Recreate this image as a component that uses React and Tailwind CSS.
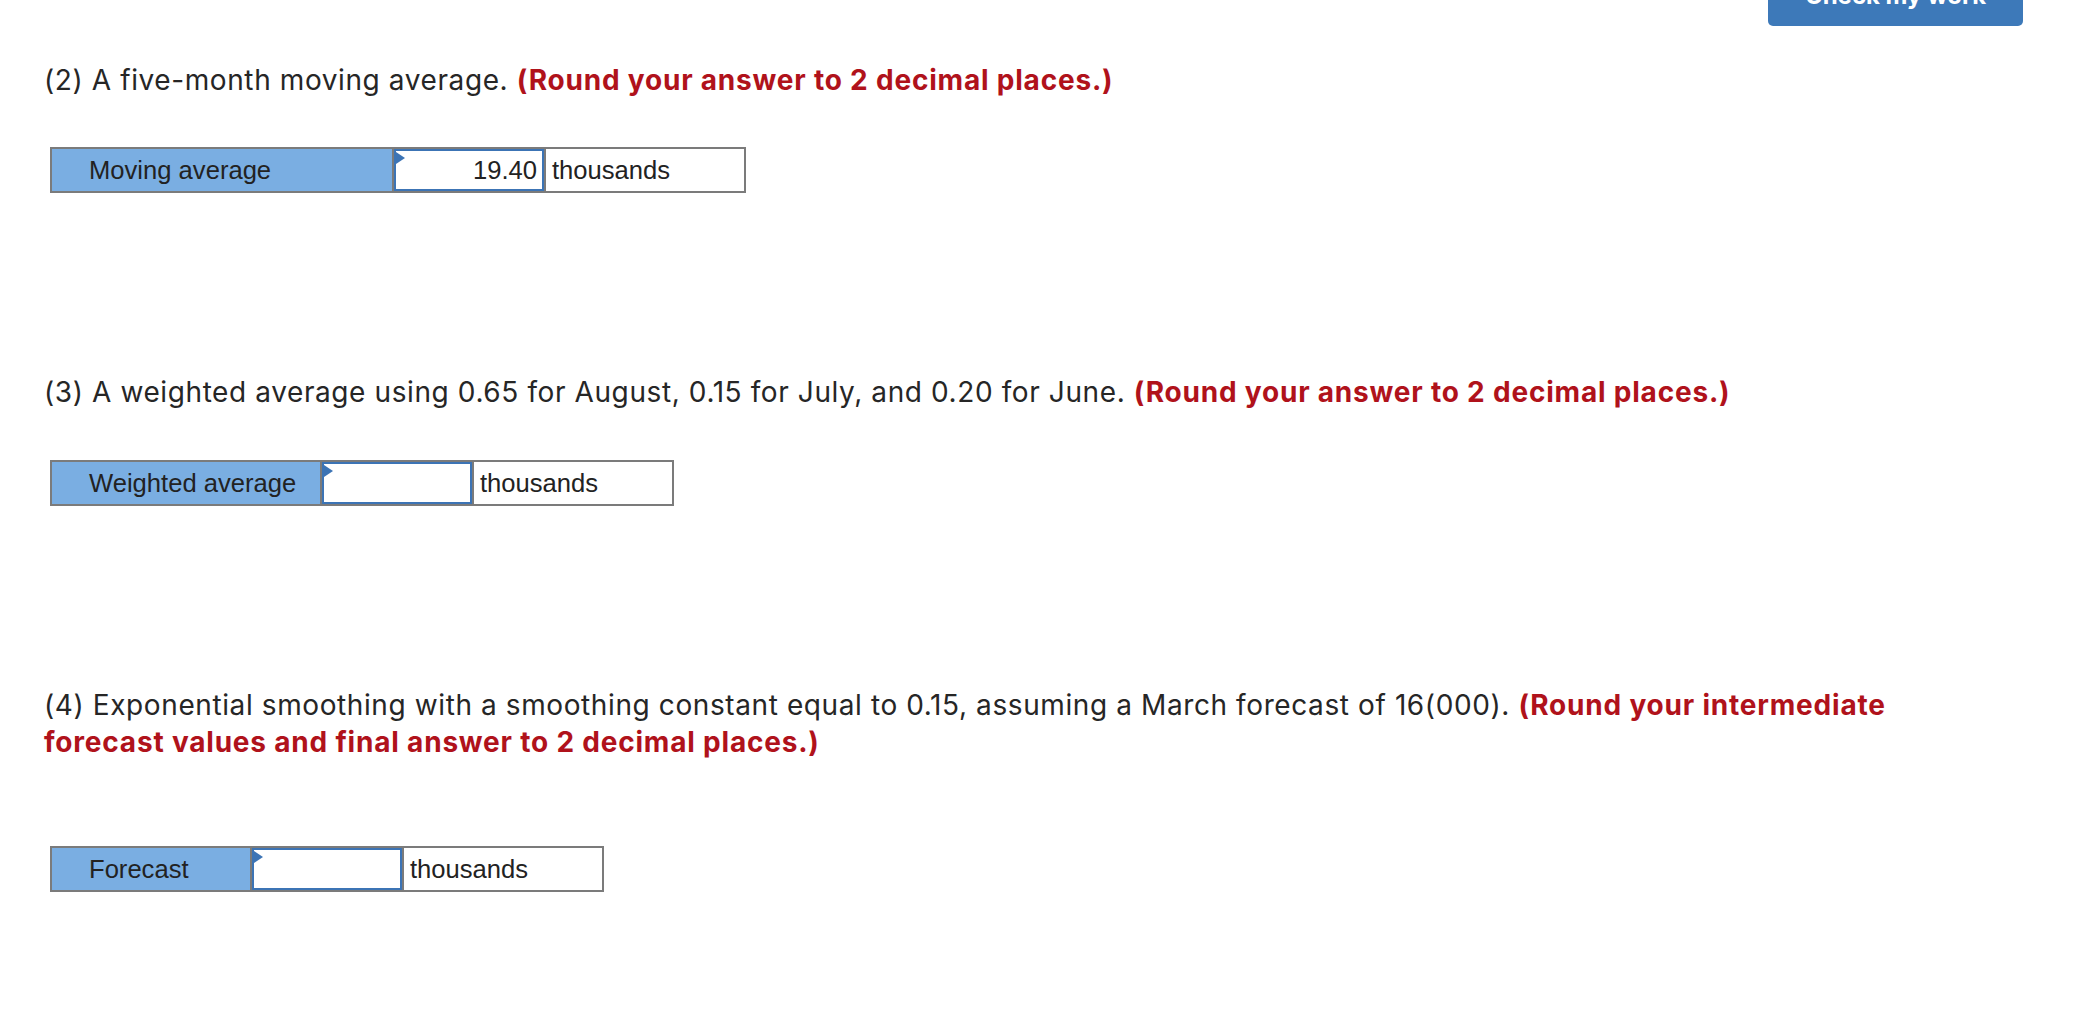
import React from 'react';

const QUESTION_FONT = { fontFamily: 'Inter, "Open Sans", sans-serif' };
const CELL_FONT = { fontFamily: '"Liberation Sans", Arial, sans-serif' };

function AnswerRow({ label, labelWidth, value }) {
    return (
        <div className="flex w-max border-2 border-[#7b7b7b] h-[46px] tracking-normal" style={CELL_FONT}>
            {/* label cell */}
            <div
                className={`flex items-center bg-[#7aaee2] border-r-2 border-[#7b7b7b] pl-[37px] text-[25.6px] text-[#222] ${labelWidth}`}
            >
                {label}
            </div>

            {/* answer input */}
            <div className="relative w-[150px] border-2 border-[#3c74b5] bg-white flex items-center justify-end pr-[5px] text-[25.6px] text-[#222]">
                <span className="absolute left-0 top-[1px] w-0 h-0 border-l-[9px] border-l-[#3c74b5] border-y-[6px] border-y-transparent" />
                {value}
            </div>

            {/* unit */}
            <div className="w-[200px] border-l-2 border-[#7b7b7b] bg-white flex items-center pl-[6px] text-[25.6px] text-[#222]">
                thousands
            </div>
        </div>
    );
}

export default function App() {
    return (
        <div className="w-[2084px] min-h-[1024px] bg-white overflow-hidden">
            {/* top button, mostly scrolled off */}
            <div className="flex justify-end pr-[61px] h-[26px]">
                <button
                    className="-mt-[34px] h-[60px] w-[255px] rounded-[5px] bg-[#3d79b9] text-white font-bold text-[24px]"
                    style={QUESTION_FONT}
                >
                    Check my work
                </button>
            </div>

            <div className="pl-[44px] text-[28px] leading-[37px] tracking-[0.6px] text-[#262626]" style={QUESTION_FONT}>
                {/* --- (2) --- */}
                <p className="mt-[36px]">
                    (2) A five-month moving average.{' '}
                    <span className="font-bold tracking-[0.8px] text-[#b0121b]">(Round your answer to 2 decimal places.)</span>
                </p>
                <div className="mt-[48px] ml-[6px]">
                    <AnswerRow label="Moving average" labelWidth="w-[342px]" value="19.40" />
                </div>

                {/* --- (3) --- */}
                <p className="mt-[181px]">
                    (3) A weighted average using 0.65 for August, 0.15 for July, and 0.20 for June.{' '}
                    <span className="font-bold tracking-[0.8px] text-[#b0121b]">(Round your answer to 2 decimal places.)</span>
                </p>
                <div className="mt-[49px] ml-[6px]">
                    <AnswerRow label="Weighted average" labelWidth="w-[270px]" value="" />
                </div>

                {/* --- (4) --- */}
                <p className="mt-[181px]">
                    (4) Exponential smoothing with a smoothing constant equal to 0.15, assuming a March forecast of 16(000).{' '}
                    <span className="font-bold tracking-[0.8px] text-[#b0121b]">
                        (Round your intermediate
                        <br />
                        forecast values and final answer to 2 decimal places.)
                    </span>
                </p>
                <div className="mt-[85px] ml-[6px]">
                    <AnswerRow label="Forecast" labelWidth="w-[200px]" value="" />
                </div>
            </div>
        </div>
    );
}
